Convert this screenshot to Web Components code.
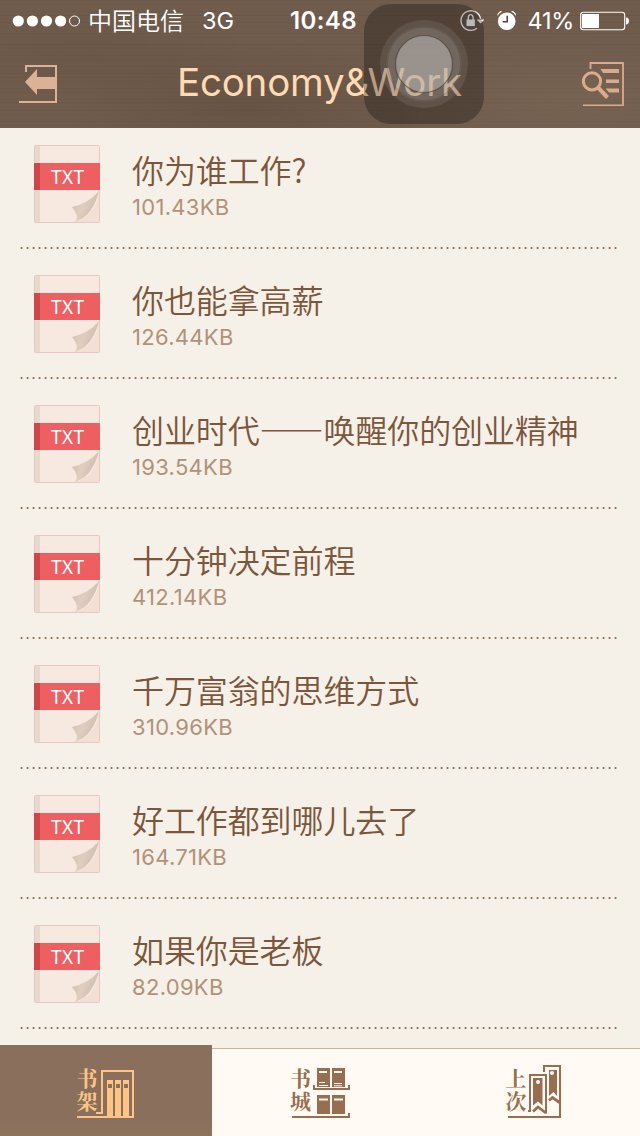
<!DOCTYPE html>
<html lang="zh-CN">
<head>
<meta charset="utf-8">
<title>Economy&amp;Work</title>
<style>
html,body{margin:0;padding:0}
body{width:640px;height:1136px;overflow:hidden;background:#f5f0e8;font-family:Inter,"Noto Sans CJK SC",sans-serif}
</style>
</head>
<body>
<reader-app></reader-app>
<script>
function define(name, html, init) {
  customElements.define(name, class extends HTMLElement {
    connectedCallback() {
      if (this.shadowRoot) return;
      const t = document.createElement('template');
      t.innerHTML = html;
      this.attachShadow({ mode: 'open' }).append(t.content.cloneNode(true));
      if (init) init(this, this.shadowRoot);
    }
  });
}

define('status-bar', `
<style>
:host{display:grid;grid-template-columns:1fr auto 1fr;height:42px;align-items:center;color:#fff;font-size:23.5px;line-height:42px;white-space:nowrap}
.left,.right{display:flex;align-items:center;height:42px}
.left{padding-left:12px}
.carrier{margin:-3px 0 0 7px;font-family:"Noto Sans CJK SC",sans-serif;font-weight:350;font-size:24px}
.net{margin-left:18px;letter-spacing:-.1px}
.time{font-weight:600;font-size:24px;letter-spacing:.4px;margin-left:7px}
.right{justify-content:flex-end;padding-right:10px}
.pct{margin:0 6px 0 12px;letter-spacing:-.3px}
svg{display:block;flex:none}
.lock{margin-right:12px}
</style>
<div class="left">
<svg width="69" height="14" viewBox="0 0 69 14" fill="#fff"><circle cx="6.3" cy="7" r="5.6"/><circle cx="20.4" cy="7" r="5.6"/><circle cx="34.5" cy="7" r="5.6"/><circle cx="48.6" cy="7" r="5.6"/><circle cx="62.5" cy="7" r="5" fill="none" stroke="#fff"/></svg>
<span class="carrier">中国电信</span><span class="net">3G</span>
</div>
<span class="time">10:48</span>
<div class="right">
<svg class="lock" width="24" height="22" viewBox="0 0 24 22"><path d="M17 18.200A9.800 9.800 0 1 1 20.500 9" fill="none" stroke="#fff" stroke-width="1.4"/><path d="M16.500 9.500h8l-4 4z" fill="#fff"/><path d="M6.500 9.500h8.400v6.600H6.500z" fill="#fff"/><path d="M8.300 10V7.400a2.4 2.8 0 0 1 4.8 0V10" fill="none" stroke="#fff" stroke-width="1.4"/></svg>
<svg width="20" height="20" viewBox="0 0 20 20" style="overflow:visible"><g transform="translate(.7 -.8)"><circle cx="10" cy="11" r="8.8" fill="#fff"/><path d="M.8 5.700A9 9 0 0 1 5.800 1.300L3.500.7 .8 3.500zM19.200 5.700a9 9 0 0 0-5-4.400l2.300-.6L19.200 3.500z" fill="#fff"/><path d="M10.500 5.5v6H6" fill="none" stroke="#51453a" stroke-width="1.5"/></g></svg>
<span class="pct">41%</span>
<svg width="50" height="20" viewBox="0 0 50 20"><rect x=".7" y="1.2" width="44" height="17.6" rx="2.7" fill="none" stroke="#fff" stroke-width="1.1"/><path d="M2 3h17v14H2z" fill="#fff"/><path d="M46 6.5c4 0 4 7 0 7z" fill="#fff"/></svg>
</div>`);

define('nav-bar', `
<style>
:host{display:flex;height:86px;justify-content:space-between;align-items:flex-start}
h1{margin:16px 1px 0 0;font-weight:400;font-size:38.5px;line-height:48px;color:#ffdab3;letter-spacing:-.2px}
svg{display:block}
.back{margin:22px 0 0 19px}.find{margin:19px 15px 0 0}
</style>
<svg class="back" width="39" height="39" viewBox="0 0 39 39"><path d="M7 7V1h30v36H0" transform="translate(0,1)" fill="none" stroke="#dbb294" stroke-width="2"/><path d="M6 18L18 5v8h19v12H18v6z" fill="#dbb294"/></svg>
<h1>Economy&amp;Work</h1>
<svg class="find" width="43" height="45" viewBox="0 0 43 45"><path d="M8.500 8V2H41v42.500H1" fill="none" stroke="#dbab8d" stroke-width="1.8"/><circle cx="10" cy="20.3" r="8.6" fill="none" stroke="#dbab8d" stroke-width="3"/><path d="M16 26.5L25.5 36.5" stroke="#dbab8d" stroke-width="4"/><path d="M18.5 8H37v4H21zM24 18.5h13v3.5H24zM23.5 27.5H37v4H27z" fill="#dbab8d"/></svg>`);

define('assistive-button', `
<style>
:host{position:absolute;left:364px;top:4px;width:120px;height:120px;border-radius:27px;background:rgba(0,0,0,.28)}
svg{display:block}
</style>
<svg width="120" height="120" viewBox="0 0 120 120"><circle cx="60" cy="60" r="44" fill="#fff" fill-opacity=".09"/><circle cx="60" cy="60" r="37.5" fill="#fff" fill-opacity=".12"/><circle cx="60" cy="60" r="36.7" fill="none" stroke="#3f342b" stroke-opacity=".3"/><circle cx="60" cy="60" r="28.5" fill="#fff" fill-opacity=".13" stroke="#40352d" stroke-opacity=".6" stroke-width="1.2"/></svg>`);

define('wood-header', `
<style>
:host{display:block;position:relative;z-index:1;height:128px;background:
radial-gradient(circle at 424px 64px,rgba(255,255,255,.29) 28px,transparent 29px),
radial-gradient(ellipse 180px 70px at 245px 108px,rgba(70,48,35,.2),transparent),
radial-gradient(ellipse 160px 50px at 90px 55px,rgba(70,48,35,.1),transparent),
radial-gradient(ellipse 180px 70px at 570px 100px,rgba(150,128,110,.2),transparent),
repeating-linear-gradient(180deg,rgba(50,35,25,.05) 0 1px,transparent 1px 4px,rgba(50,35,25,.03) 4px 5px,transparent 5px 11px),
repeating-linear-gradient(180deg,transparent 0 15px,rgba(50,35,25,.08) 15px 16px,transparent 16px 29px),#705c4c}
</style><slot></slot>`);

define('txt-icon', `
<style>:host{display:block;width:66px;height:78px}svg{display:block}text{font-family:"Noto Sans",sans-serif}</style>
<svg width="66" height="78" viewBox="0 0 66 78">
<defs><linearGradient id="c" x1="0" y1="0" x2="1" y2=".45"><stop offset="0" stop-color="#cabbab"/><stop offset=".5" stop-color="#e0cec0"/><stop offset="1" stop-color="#cdbbad"/></linearGradient></defs>
<rect x=".5" y=".5" width="65" height="77" rx="1.2" fill="#f7e9df" stroke="#e8c8c5"/>
<path d="M1 1h5v76H1z" fill="#e8d9cf"/>
<path d="M65 46Q62 72 40 77h25z" fill="#f1e0d3"/>
<path d="M0 18h66v27H0z" fill="#ed5f60"/><path d="M0 18h6v27H0z" fill="#cd4649"/>
<path d="M65 46C61 61 55 72 41 77Q46 72 38 62Q55 58 65 46Z" fill="url(#c)"/>
<text x="33.5" y="38.500" font-size="19" text-anchor="middle" textLength="33" fill="#fff">TXT</text></svg>`);

define('book-row', `
<style>
:host{display:block;height:130px;padding:0 22px 0 20px;box-sizing:border-box}
.row{display:flex;height:128px;padding:26px 0 0 14px;box-sizing:border-box}
.info{margin-left:32px;white-space:nowrap}
.name{height:48px;line-height:48px;font-family:"Noto Sans CJK SC",sans-serif;font-weight:350;font-size:32px;letter-spacing:-.1px;color:#7b563b}
.name ::slotted(b),::slotted(b){font-weight:500}
.size{height:28px;line-height:28px;font-size:22px;color:#b09279;letter-spacing:.3px}
.rule{height:2px;background:repeating-linear-gradient(90deg,#d5c8ba 0 1px,#8d6f58 1px 2px,#c9b9a9 2px 3px,transparent 3px 6px)}
</style>
<div class="row"><txt-icon></txt-icon><div class="info"><div class="name"><slot></slot></div><div class="size"></div></div></div>
<div class="rule"></div>`, (el, root) => { root.querySelector('.size').textContent = el.getAttribute('size'); });

define('book-list', `<style>:host{display:block;height:926px;margin-top:-9px;overflow:hidden}</style><slot></slot>`);

const ICONS = {
  shelf: '<path d="M32 45h6V3h31v46H13" fill="none" stroke="currentColor" stroke-width="2"/><path d="M43 12h6v36h-6zM51 12h6v36h-6zM59 12h6v36h-6z" fill="currentColor"/><path d="M44 16h4v4h-4zM52 16h4v4h-4zM60 16h4v4h-4z" fill="#896f5c"/>',
  store: '<path d="M36 17v4h35v-4M14 49h57v-4" fill="none" stroke="currentColor" stroke-width="2"/><path d="M39 0h13v19H39zM54 0h13v19H54zM39 27h13v19H39zM54 27h13v19H54z" fill="currentColor"/><path d="M41 4h8M56 4h8M41 31.5h9M56 31.5h9" stroke="#fffaf3" stroke-width="2"/><path d="M41 14.5h6M41 17.5h9M56 15.5h8M56 17.8h8" stroke="#fffaf3"/>',
  last: '<path d="M31 43h2V7h16v38.500" fill="none" stroke="currentColor" stroke-width="2"/><path d="M47 4V-2h16v51H11" fill="none" stroke="currentColor" stroke-width="2"/><path d="M36 10h9.500v27.500l-4.500-4-5 4zM52 2h8v26l-3.500-4-4.500 4z" fill="currentColor"/><path d="M36 43.500l5-4.500 8 6M52 32.500l3.500-3 7 5" fill="none" stroke="currentColor" stroke-width="2.800"/><circle cx="41" cy="14" r="2" fill="#fffaf3"/><circle cx="55" cy="5" r="2" fill="#fffaf3"/>'
};
define('tab-item', `
<style>
:host{display:flex;justify-content:center;align-items:flex-start;box-sizing:border-box;height:88px;color:#986e51;padding-top:20px}
:host([active]){height:91px;color:#fdc484;padding-top:23px;background:linear-gradient(#896f5c 0 65px,#8d735c)}
svg{display:block;overflow:visible}
:host([icon=shelf]){padding-right:4px}
:host([icon=store]){padding-right:2px}
:host([icon=last]){padding-left:8px}
text{writing-mode:vertical-rl;letter-spacing:2px;font-family:"Noto Serif CJK SC","Noto Serif SC","Noto Sans CJK SC",serif;font-weight:700;font-size:21px;fill:currentColor}
</style><svg width="80" height="56" viewBox="0 0 80 56"></svg>`, (el, root) => {
  const k = el.getAttribute('icon'), w = el.getAttribute('label');
  const x = { shelf: 23, store: 22.5, last: 19 }[k];
  root.querySelector('svg').innerHTML = `<text x="${x}" y="0">${w}</text>` + ICONS[k];
});

define('tab-bar', `
<style>
:host{display:grid;grid-template-columns:212px 214px 214px;height:91px;align-items:end;background:linear-gradient(transparent 0 3px,#ceb19c 3px 4px,#fffaf3 4px)}
</style><slot></slot>`);

define('reader-app', `
<style>:host{display:flex;flex-direction:column;width:640px;height:1136px;position:relative}</style>
<wood-header><status-bar></status-bar><nav-bar></nav-bar><assistive-button></assistive-button></wood-header>
<book-list>
<book-row size="101.43KB">你为谁工作?</book-row>
<book-row size="126.44KB">你也能拿高薪</book-row>
<book-row size="193.54KB">创业时代<b>——</b>唤醒你的创业精神</book-row>
<book-row size="412.14KB">十分钟决定前程</book-row>
<book-row size="310.96KB">千万富翁的思维方式</book-row>
<book-row size="164.71KB">好工作都到哪儿去了</book-row>
<book-row size="82.09KB">如果你是老板</book-row>
</book-list>
<tab-bar><tab-item active icon="shelf" label="书架"></tab-item><tab-item icon="store" label="书城"></tab-item><tab-item icon="last" label="上次"></tab-item></tab-bar>`);
</script>
</body>
</html>
